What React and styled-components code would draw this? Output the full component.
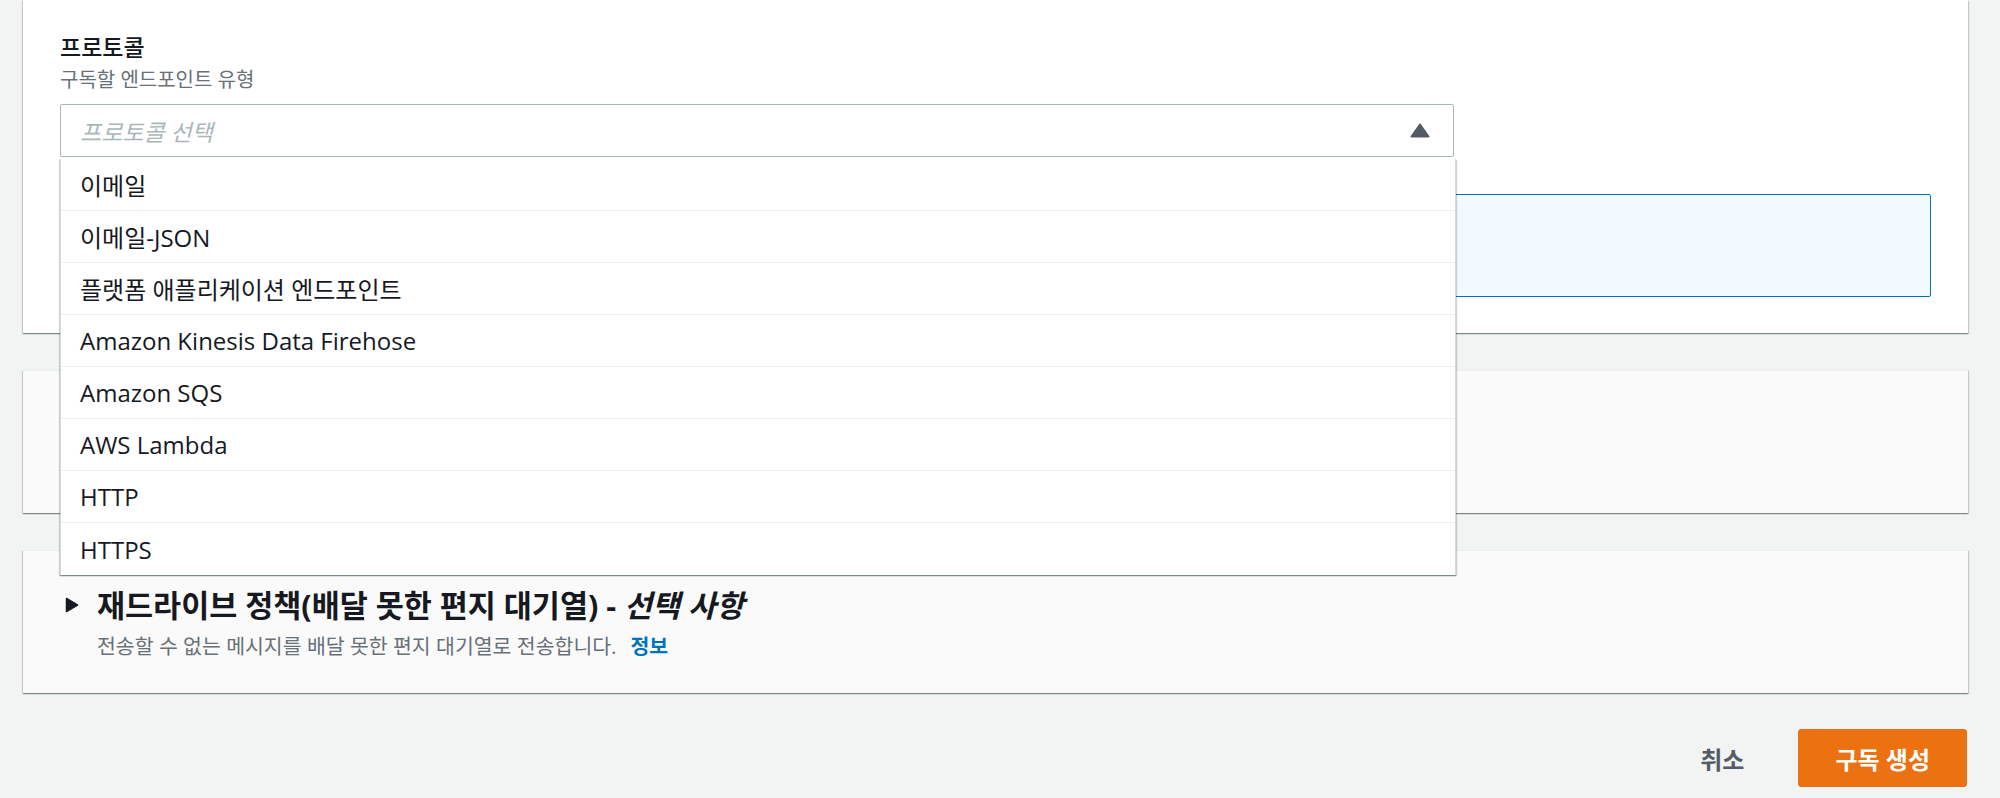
import React from "react";
import styled, { createGlobalStyle } from "styled-components";

const GlobalStyle = createGlobalStyle`
  html, body {
    margin: 0;
    padding: 0;
    background: #f2f3f3;
  }
  body {
    font-family: "Open Sans", "Noto Sans CJK KR", sans-serif;
    color: #16191f;
    -webkit-font-smoothing: antialiased;
  }
  * { box-sizing: border-box; }
`;

const Page = styled.div`
  width: 2000px;
  padding: 0 32px 0 23px;
  display: flex;
  flex-direction: column;
  gap: 37px;
`;

const cardShadow = `0 1px 1px 0 rgba(0,28,36,.3), 1px 1px 1px 0 rgba(0,28,36,.15), -1px 1px 1px 0 rgba(0,28,36,.15)`;

const Card = styled.section`
  position: relative;
  background: ${(p) => (p.$muted ? "#fafafa" : "#ffffff")};
  border-top: ${(p) => (p.$muted ? "1px solid #eaeded" : "none")};
  box-shadow: ${cardShadow};
  padding: ${(p) => (p.$muted ? "35px 37px 0" : "32px 37px 36px")};
  height: ${(p) => (p.$muted ? "143px" : "auto")};
`;

const FieldLabel = styled.div`
  font-size: 23px;
  line-height: 30px;
  font-weight: 500;
  color: #16191f;
`;

const FieldHint = styled.div`
  margin-top: 4px;
  font-size: 20px;
  line-height: 28px;
  color: #687078;
`;

const SelectWrap = styled.div`
  position: relative;
  width: 1394px;
  margin-top: 10px;
`;

const SelectBox = styled.div`
  height: 53px;
  border: 1px solid #aab7b8;
  border-radius: 2px;
  background: #fff;
  display: flex;
  align-items: center;
  justify-content: space-between;
  padding: 0 23px 0 19px;
`;

const Placeholder = styled.span`
  font-size: 23px;
  font-style: italic;
  color: #aab7b8;
`;

const Dropdown = styled.ul`
  position: absolute;
  top: calc(100% + 2px);
  left: 0;
  right: -2px;
  margin: 0;
  padding: 0;
  list-style: none;
  background: #fff;
  border-left: 1px solid #d5dbdb;
  border-right: 1px solid #d5dbdb;
  box-shadow: ${cardShadow};
  z-index: 10;
`;

const Option = styled.li`
  height: 52px;
  display: flex;
  align-items: center;
  padding: 0 19px;
  font-size: 24px;
  color: #16191f;
  border-bottom: 1px solid #eaeded;
  &:last-child {
    border-bottom: none;
  }
`;

const InfoAlert = styled.div`
  margin-top: 37px;
  height: 103px;
  border: 1px solid #0073bb;
  border-radius: 2px;
  background: #f1faff;
`;

const ExpandHeader = styled.div`
  display: flex;
  align-items: center;
  gap: 18px;
  padding-left: 5px;
`;

const Heading = styled.h2`
  margin: 0;
  font-size: 30.5px;
  line-height: 38px;
  font-weight: 700;
  color: #16191f;
  & > em {
    font-style: italic;
  }
`;

const ExpandDesc = styled.p`
  margin: 8px 0 0 37px;
  font-size: 20.5px;
  line-height: 28px;
  color: #687078;
`;

const InfoLink = styled.a`
  margin-left: 14px;
  color: #0073bb;
  font-weight: 700;
  text-decoration: none;
`;

const Actions = styled.div`
  display: flex;
  justify-content: flex-end;
  align-items: center;
  gap: 34px;
  margin-top: -1px;
  padding-right: 1px;
`;

const Button = styled.button`
  font-family: "Open Sans", "Noto Sans CJK KR", sans-serif;
  font-size: 24px;
  font-weight: 700;
  height: 58px;
  border-radius: 3px;
  cursor: pointer;
  border: ${(p) => (p.$primary ? "1px solid #ec7211" : "none")};
  background: ${(p) => (p.$primary ? "#ec7211" : "transparent")};
  color: ${(p) => (p.$primary ? "#ffffff" : "#545b64")};
  padding: ${(p) => (p.$primary ? "0 36px" : "0 20px")};
`;

const CaretUp = () => (
  <svg width="20" height="15" viewBox="0 0 20 15" aria-hidden="true">
    <path
      d="M10 1.5 L18.5 13.5 H1.5 Z"
      fill="#545b64"
      stroke="#545b64"
      strokeWidth="2"
      strokeLinejoin="round"
    />
  </svg>
);

const CaretRight = () => (
  <svg width="14" height="16" viewBox="0 0 14 16" aria-hidden="true">
    <path
      d="M1.5 1.5 L12.5 8 L1.5 14.5 Z"
      fill="#16191f"
      stroke="#16191f"
      strokeWidth="1.5"
      strokeLinejoin="round"
    />
  </svg>
);

const protocols = [
  "이메일",
  "이메일-JSON",
  "플랫폼 애플리케이션 엔드포인트",
  "Amazon Kinesis Data Firehose",
  "Amazon SQS",
  "AWS Lambda",
  "HTTP",
  "HTTPS",
];

export default function App() {
  return (
    <>
      <GlobalStyle />
      <Page>
        <Card>
          <FieldLabel>프로토콜</FieldLabel>
          <FieldHint>구독할 엔드포인트 유형</FieldHint>
          <SelectWrap>
            <SelectBox>
              <Placeholder>프로토콜 선택</Placeholder>
              <CaretUp />
            </SelectBox>
            <Dropdown>
              {protocols.map((p) => (
                <Option key={p}>{p}</Option>
              ))}
            </Dropdown>
          </SelectWrap>
          <InfoAlert />
        </Card>
        <Card $muted />
        <Card $muted>
          <ExpandHeader>
            <CaretRight />
            <Heading>
              재드라이브 정책(배달 못한 편지 대기열) - <em>선택 사항</em>
            </Heading>
          </ExpandHeader>
          <ExpandDesc>
            전송할 수 없는 메시지를 배달 못한 편지 대기열로 전송합니다.
            <InfoLink href="#">정보</InfoLink>
          </ExpandDesc>
        </Card>
        <Actions>
          <Button>취소</Button>
          <Button $primary>구독 생성</Button>
        </Actions>
      </Page>
    </>
  );
}
